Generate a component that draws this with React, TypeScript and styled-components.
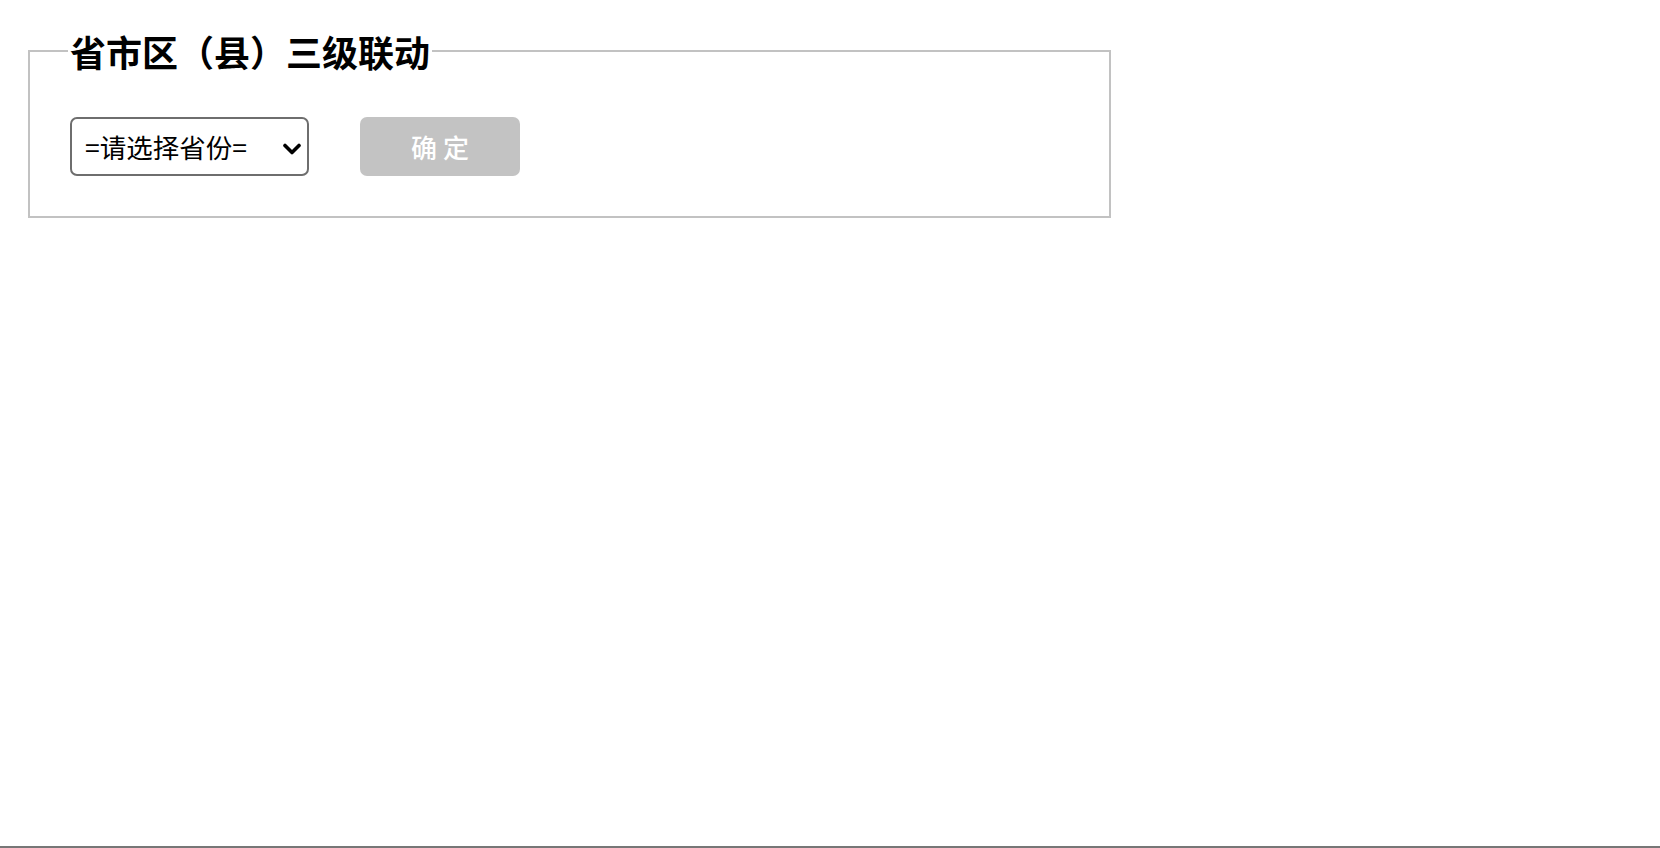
import React from "react";
import styled, { createGlobalStyle } from "styled-components";

const GlobalStyle = createGlobalStyle`
  html, body {
    margin: 0;
    padding: 0;
    background: #ffffff;
  }
  body {
    font-family: "Noto Sans CJK SC", "Noto Sans", sans-serif;
    color: #000;
  }
`;

const Page = styled.div`
  min-height: 100vh;
  box-sizing: border-box;
  padding: 25px 0 0 28px;
  border-bottom: 2px solid #777777;
`;

const Panel = styled.fieldset`
  width: 1083px;
  box-sizing: border-box;
  margin: 0;
  padding: 40px;
  border: 2px solid #c2c2c2;
`;

const Title = styled.legend`
  margin-left: -2px;
  padding: 0 2px;
  font-size: 36px;
  line-height: 52px;
  font-weight: 700;
  color: #000;
`;

const Row = styled.div`
  display: flex;
  align-items: center;
  gap: 51px;
`;

const SelectWrap = styled.div`
  position: relative;
  width: 239px;
  height: 59px;
`;

const Select = styled.select`
  appearance: none;
  -webkit-appearance: none;
  width: 100%;
  height: 100%;
  box-sizing: border-box;
  margin: 0;
  padding: 0 40px 0 13px;
  border: 2px solid #6e6e6e;
  border-radius: 7px;
  background: #fff;
  color: #000;
  font-family: "Noto Sans CJK SC", "Noto Sans", sans-serif;
  font-size: 26.5px;
  font-weight: 400;
  outline: none;
`;

const Arrow = styled.svg`
  position: absolute;
  right: 7px;
  top: 26px;
  width: 20px;
  height: 12px;
  pointer-events: none;
`;

const ConfirmButton = styled.button`
  width: 160px;
  height: 59px;
  box-sizing: border-box;
  margin: 0;
  padding: 0;
  border: none;
  border-radius: 7px;
  background: #c3c3c3;
  color: #ffffff;
  font-family: "Noto Sans CJK SC", "Noto Sans", sans-serif;
  font-size: 26px;
  font-weight: 500;
  cursor: not-allowed;
`;

const App = () => {
  return (
    <Page>
      <GlobalStyle />
      <Panel>
        <Title>省市区（县）三级联动</Title>
        <Row>
          <SelectWrap>
            <Select defaultValue="">
              <option value="">=请选择省份=</option>
            </Select>
            <Arrow viewBox="0 0 20 12">
              <path
                d="M3 2.5 L10 9.5 L17 2.5"
                fill="none"
                stroke="#000"
                strokeWidth="3.6"
                strokeLinecap="round"
                strokeLinejoin="round"
              />
            </Arrow>
          </SelectWrap>
          <ConfirmButton disabled>确 定</ConfirmButton>
        </Row>
      </Panel>
    </Page>
  );
};

export default App;
